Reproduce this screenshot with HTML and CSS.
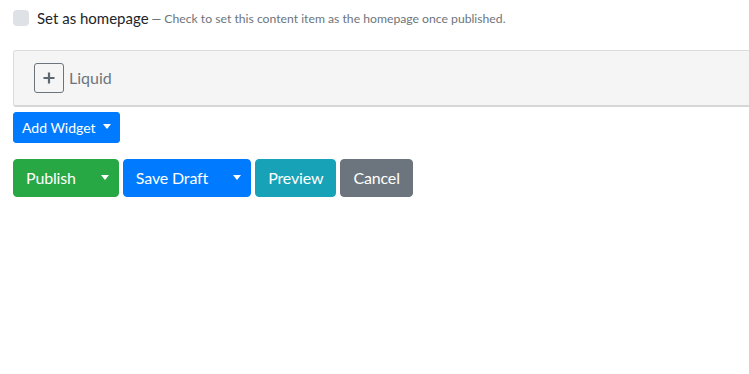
FILE: index.html
```html
<!DOCTYPE html>
<html>
<head>
<meta charset="utf-8">
<link rel="stylesheet" href="styles.css">
</head>
<body>
<div class="page">
  <div class="check-row">
    <span class="checkbox"></span>
    <label class="check-label">Set as homepage</label>
    <span class="hint">— Check to set this content item as the homepage once published.</span>
  </div>

  <div class="panel">
    <span class="add-box">
      <svg width="14" height="14" viewBox="0 0 14 14"><path d="M7 1.5v11M1.5 7h11" stroke="#5f676e" stroke-width="2.2" fill="none"/></svg>
    </span>
    <span class="panel-title">Liquid</span>
  </div>

  <div class="widget-row">
    <button class="btn btn-sm btn-blue">Add Widget<span class="caret"></span></button>
  </div>

  <div class="actions">
    <div class="btn-group">
      <button class="btn btn-green btn-main">Publish</button>
      <button class="btn btn-green btn-split"><span class="caret"></span></button>
    </div>
    <div class="btn-group">
      <button class="btn btn-blue btn-main">Save Draft</button>
      <button class="btn btn-blue btn-split"><span class="caret"></span></button>
    </div>
    <button class="btn btn-teal">Preview</button>
    <button class="btn btn-gray">Cancel</button>
  </div>
</div>
</body>
</html>
```

FILE: styles.css
```css
html, body {
  margin: 0;
  padding: 0;
  background: #fff;
  overflow: hidden;
}
body {
  font-family: "Segoe UI", "Lato", "Liberation Sans", sans-serif;
  color: #212529;
  font-size: 16px;
  line-height: 1.5;
}
.page {
  padding: 6px 0 0 13px;
}
.check-row {
  display: flex;
  align-items: center;
  height: 24px;
}
.checkbox {
  width: 16px;
  height: 16px;
  border-radius: 4px;
  background: #dee2e6;
  margin-right: 8px;
  flex: none;
}
.check-label {
  font-size: 15px;
  color: #212529;
}
.hint {
  font-size: 12.2px;
  color: #6c757d;
  margin-left: 3px;
  padding-top: 2px;
}
.panel {
  margin-top: 20px;
  width: 760px;
  box-sizing: border-box;
  background: #f5f5f5;
  border: 1px solid #dcdcdc;
  border-bottom: 2px solid #d6d6d6;
  border-radius: 3px 0 0 3px;
  padding: 12px 20px;
  display: flex;
  align-items: center;
}
.add-box {
  width: 30px;
  height: 30px;
  box-sizing: border-box;
  border: 1px solid #6c757d;
  border-radius: 3px;
  display: flex;
  align-items: center;
  justify-content: center;
  margin-right: 5px;
}
.panel-title {
  color: #6c757d;
  font-size: 16px;
}
.widget-row {
  margin-top: 5px;
}
.btn {
  font-family: inherit;
  border: 1px solid transparent;
  color: #fff;
  font-size: 16px;
  line-height: 24px;
  padding: 6px 12px;
  border-radius: 4px;
  display: inline-flex;
  align-items: center;
  cursor: pointer;
  letter-spacing: -0.15px;
}
.btn-sm {
  font-size: 14px;
  line-height: 21px;
  padding: 4px 8px;
  border-radius: 3px;
  letter-spacing: 0;
}
.btn-blue { background: #007bff; border-color: #007bff; }
.btn-green { background: #28a745; border-color: #28a745; }
.btn-teal { background: #17a2b8; border-color: #17a2b8; }
.btn-gray { background: #6c757d; border-color: #6c757d; }
.caret {
  display: inline-block;
  width: 0;
  height: 0;
  border-top: 5px solid #fff;
  border-left: 4.8px solid transparent;
  border-right: 4.8px solid transparent;
  margin-left: 7px;
  margin-top: -2px;
}
.actions {
  margin-top: 16px;
  display: flex;
  gap: 4px;
}
.btn-group {
  display: flex;
}
.btn-group .btn-main {
  border-top-right-radius: 0;
  border-bottom-right-radius: 0;
  padding-right: 15px;
}
.btn-group .btn-split {
  border-top-left-radius: 0;
  border-bottom-left-radius: 0;
  padding-left: 9px;
  padding-right: 9px;
  margin-left: -1px;
}
.btn-split .caret {
  margin-left: 0;
}
```
